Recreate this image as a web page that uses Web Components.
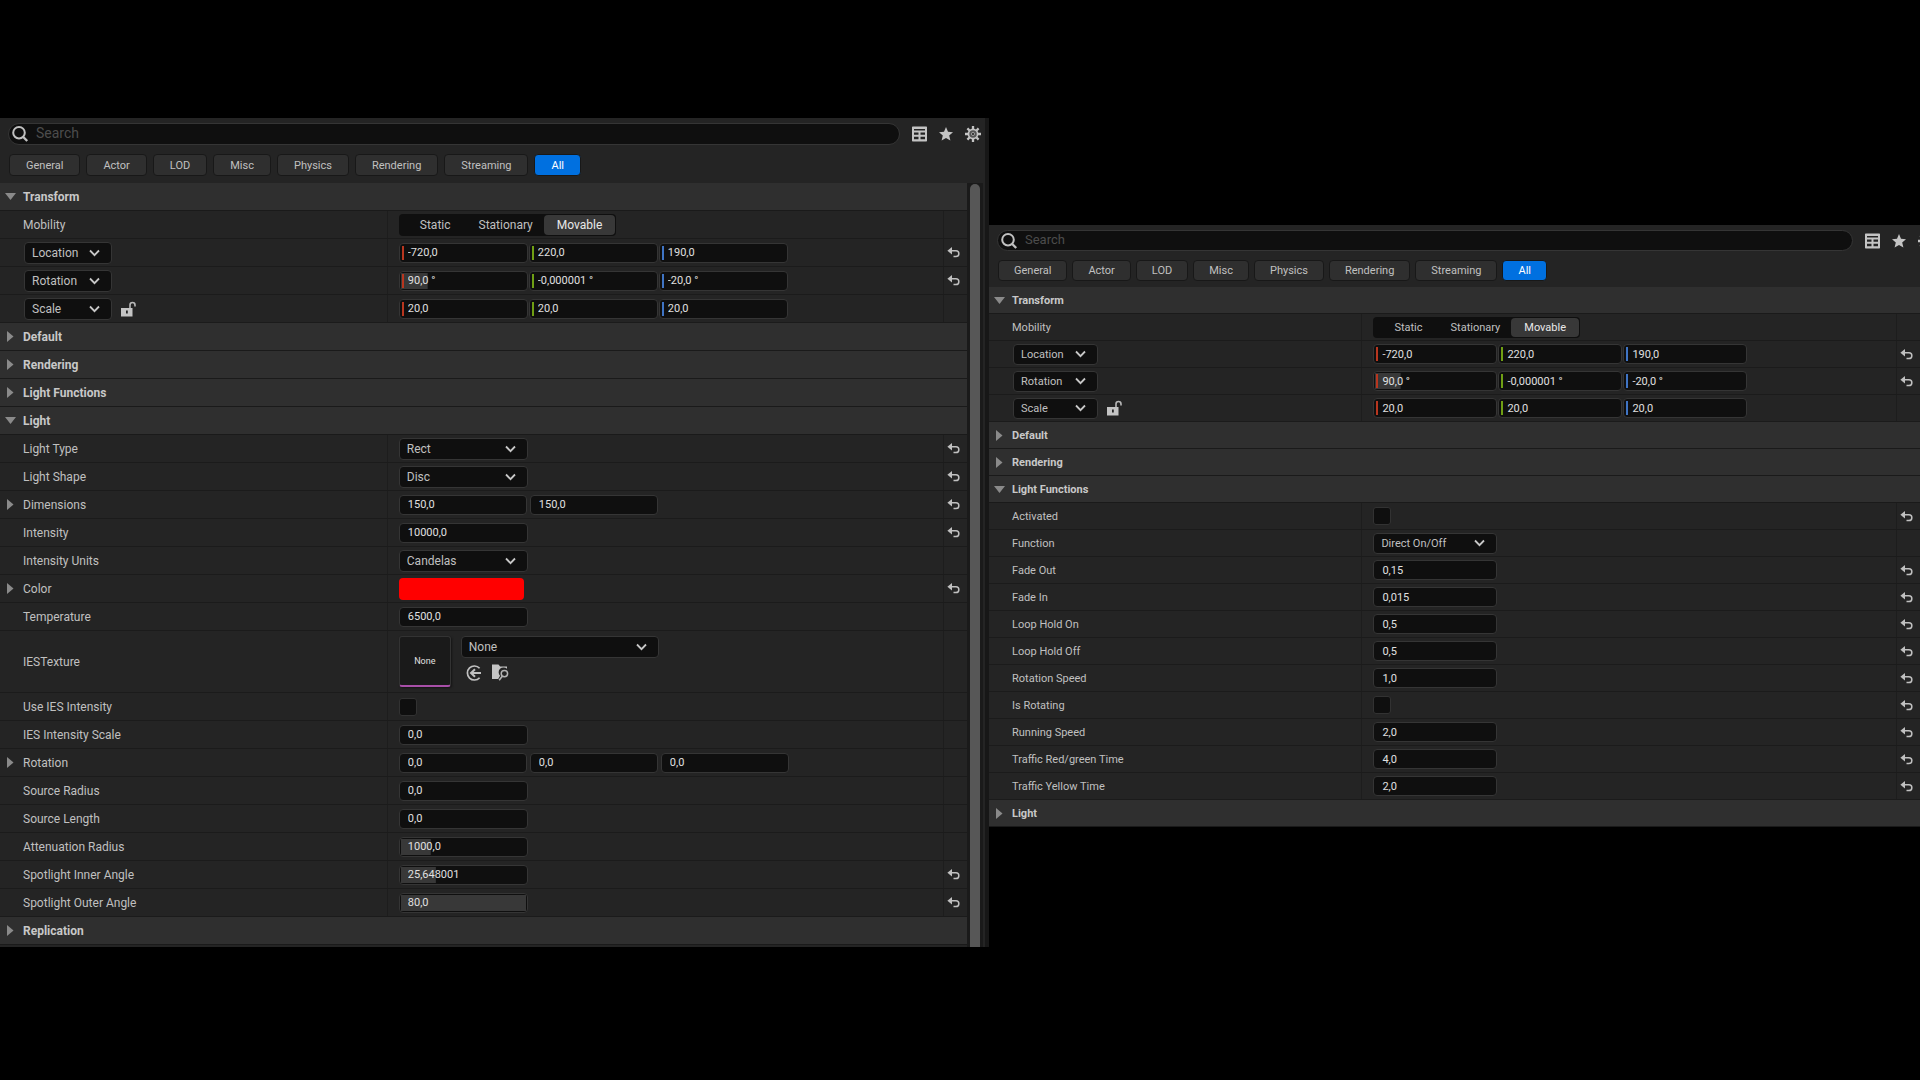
<!DOCTYPE html>
<html lang="en">
<head>
<meta charset="utf-8">
<title>Details</title>
<style>
  html, body { margin: 0; background: #000; }
  body { min-height: 100vh; overflow-x: hidden; font-family: Roboto, "Liberation Sans", sans-serif; color: #c0c0c0; }
  main { display: grid; grid-template-columns: 989fr 931fr; align-items: start; }
  details-panel.first { --row: 28px; --control: 22px; --field: 20px; --size: 12px; --small: 11px; --search: 14px; --unit: 129px; --drop: 88px; --tab-pad: 16px; --tab-gap: 6px; --end: 7px; margin-top: 118px; }
  details-panel.second { --row: 27px; --control: 21px; --field: 20px; --size: 11px; --small: 11px; --search: 13px; --unit: 124px; --drop: 85px; --tab-pad: 15px; --tab-gap: 5px; --end: 6px; margin-top: 225px; }
</style>
</head>
<body>
<main>
  <details-panel class="first" scrollbar>
    <prop-section name="Transform" open>
      <prop-row label="Mobility" kind="segments" values="Static|Stationary|Movable"></prop-row>
      <prop-row label="Location" kind="axes" values="-720,0|220,0|190,0" reset></prop-row>
      <prop-row label="Rotation" kind="axes" values="90,0 °|-0,000001 °|-20,0 °" fill="21" reset></prop-row>
      <prop-row label="Scale" kind="axes" values="20,0|20,0|20,0" lock></prop-row>
    </prop-section>
    <prop-section name="Default"></prop-section>
    <prop-section name="Rendering"></prop-section>
    <prop-section name="Light Functions"></prop-section>
    <prop-section name="Light" open>
      <prop-row label="Light Type" kind="choice" values="Rect" reset></prop-row>
      <prop-row label="Light Shape" kind="choice" values="Disc" reset></prop-row>
      <prop-row label="Dimensions" kind="numbers" values="150,0|150,0" expandable reset></prop-row>
      <prop-row label="Intensity" kind="numbers" values="10000,0" reset></prop-row>
      <prop-row label="Intensity Units" kind="choice" values="Candelas"></prop-row>
      <prop-row label="Color" kind="color" values="#ff0000" expandable reset></prop-row>
      <prop-row label="Temperature" kind="numbers" values="6500,0"></prop-row>
      <prop-row label="IESTexture" kind="asset" values="None"></prop-row>
      <prop-row label="Use IES Intensity" kind="check"></prop-row>
      <prop-row label="IES Intensity Scale" kind="numbers" values="0,0"></prop-row>
      <prop-row label="Rotation" kind="numbers" values="0,0|0,0|0,0" expandable></prop-row>
      <prop-row label="Source Radius" kind="numbers" values="0,0"></prop-row>
      <prop-row label="Source Length" kind="numbers" values="0,0"></prop-row>
      <prop-row label="Attenuation Radius" kind="numbers" values="1000,0" fill="25"></prop-row>
      <prop-row label="Spotlight Inner Angle" kind="numbers" values="25,648001" fill="29" reset></prop-row>
      <prop-row label="Spotlight Outer Angle" kind="numbers" values="80,0" fill="100" reset></prop-row>
    </prop-section>
    <prop-section name="Replication"></prop-section>
  </details-panel>

  <details-panel class="second">
    <prop-section name="Transform" open>
      <prop-row label="Mobility" kind="segments" values="Static|Stationary|Movable"></prop-row>
      <prop-row label="Location" kind="axes" values="-720,0|220,0|190,0" reset></prop-row>
      <prop-row label="Rotation" kind="axes" values="90,0 °|-0,000001 °|-20,0 °" fill="21" reset></prop-row>
      <prop-row label="Scale" kind="axes" values="20,0|20,0|20,0" lock></prop-row>
    </prop-section>
    <prop-section name="Default"></prop-section>
    <prop-section name="Rendering"></prop-section>
    <prop-section name="Light Functions" open>
      <prop-row label="Activated" kind="check" reset></prop-row>
      <prop-row label="Function" kind="choice" values="Direct On/Off"></prop-row>
      <prop-row label="Fade Out" kind="numbers" values="0,15" reset></prop-row>
      <prop-row label="Fade In" kind="numbers" values="0,015" reset></prop-row>
      <prop-row label="Loop Hold On" kind="numbers" values="0,5" reset></prop-row>
      <prop-row label="Loop Hold Off" kind="numbers" values="0,5" reset></prop-row>
      <prop-row label="Rotation Speed" kind="numbers" values="1,0" reset></prop-row>
      <prop-row label="Is Rotating" kind="check" reset></prop-row>
      <prop-row label="Running Speed" kind="numbers" values="2,0" reset></prop-row>
      <prop-row label="Traffic Red/green Time" kind="numbers" values="4,0" reset></prop-row>
      <prop-row label="Traffic Yellow Time" kind="numbers" values="2,0" reset></prop-row>
    </prop-section>
    <prop-section name="Light"></prop-section>
  </details-panel>
</main>

<script>
const BASE = `
  :host, *, *::before { box-sizing: border-box; }
  button, input, select { font: inherit; color: inherit; margin: 0; padding: 0; border: 0; background: none; outline: none; border-radius: 0; appearance: none; }
  button, select { cursor: pointer; }
  svg { display: block; flex: none; }
`;

const ICONS = {
  search: `<svg width="18" height="18" viewBox="0 0 18 18" fill="none" stroke="#c0c0c0" stroke-width="2"><circle cx="8" cy="7.7" r="5.8"/><path d="M12.2 12l4 4" stroke-width="2.4"/></svg>`,
  table: `<svg width="15" height="16" viewBox="0 0 15 16"><path fill="#c4c4c4" fill-rule="evenodd" d="M0 1.2Q0 .5.7.5h13.6q.7 0 .7.7v13.6q0 .7-.7.7H.7q-.7 0-.7-.7zM2 3v1.6h11V3zM2 6.6v2.2h4.5V6.6zm6.5 0v2.2H13V6.6zM2 10.8v2.4h4.5v-2.4zm6.5 0v2.4H13v-2.4z"/></svg>`,
  star: `<svg width="14" height="14" viewBox="0 0 14 14"><path fill="#c4c4c4" d="M7 0l2 4.7 5 .5-3.8 3.3 1.2 5.1L7 10.9l-4.4 2.7 1.2-5.1L0 5.2l5-.5z"/></svg>`,
  gear: `<svg width="16" height="16" viewBox="0 0 16 16" fill="none" stroke="#c4c4c4"><g stroke-width="2.3"><path d="M8 0v3M8 13v3M0 8h3M13 8h3M2.4 2.4l2.1 2.1M11.5 11.5l2.1 2.1M13.6 2.4l-2.1 2.1M4.5 11.5l-2.1 2.1"/></g><circle cx="8" cy="8" r="4.6" stroke-width="1.7" fill="#555"/><circle cx="8" cy="8" r="1.6" fill="#333" stroke="#999" stroke-width="1"/></svg>`,
  chevron: `<svg class="chevron" width="11" height="8" viewBox="0 0 11 8" fill="none" stroke="#c8c8c8" stroke-width="1.8"><path d="M1 1.5l4.5 4.6L10 1.5"/></svg>`,
  reset: `<svg width="13" height="11" viewBox="0 0 13 11"><path fill="#c0c0c0" d="M5 0v7.6L.4 3.8z"/><path d="M3 3.8h6a2.8 2.8 0 0 1 0 5.7H6.5" fill="none" stroke="#c0c0c0" stroke-width="1.5"/></svg>`,
  lock: `<svg width="15" height="16" viewBox="0 0 15 16"><path d="M9 7V4a2.5 2.5 0 0 1 5 0v1.6" fill="none" stroke="#b8b8b8" stroke-width="1.6"/><path fill="#c4c4c4" fill-rule="evenodd" d="M0 7h11.5v8.5H0zM5 9.5v3h1.8v-3z"/></svg>`,
  use: `<svg width="16" height="16" viewBox="0 0 16 16" fill="none" stroke="#c0c0c0"><path d="M13.6 3.3a7 7 0 1 0 0 9.4" stroke-width="1.7"/><path d="M15 8H6" stroke-width="2"/><path d="M9 4.2L5 8l4 3.8" stroke-width="2"/></svg>`,
  browse: `<svg width="17" height="17" viewBox="0 0 17 17"><path fill="#c4c4c4" d="M0 .5h6.5l1.6 2H15v2.3a4.9 4.9 0 0 0-6.9 7L6.2 15H0z"/><circle cx="12.4" cy="9.6" r="3.2" fill="#242424" stroke="#b4b4b4" stroke-width="1.5"/><path d="M10.4 12L7.2 16.2" stroke="#b4b4b4" stroke-width="1.6"/></svg>`,
  down: `<svg width="11" height="7" viewBox="0 0 11 7"><path fill="#8a8a8a" d="M0 0h11L5.5 7z"/></svg>`,
  right: `<svg width="7" height="11" viewBox="0 0 7 11"><path fill="#8a8a8a" d="M0 0v11l6.5-5.5z"/></svg>`
};

/* Search field with the view buttons at its right */
class SearchBar extends HTMLElement {
  connectedCallback() {
    this.attachShadow({ mode: 'open' }).innerHTML = `<style>${BASE}
      :host { display: flex; align-items: center; gap: 12px; }
      label { flex: 1; display: flex; align-items: center; gap: 7px; height: var(--control); padding-left: 2px; border: 1px solid #353535; border-radius: 11px; background: #0f0f0f; }
      input { flex: 1; min-width: 0; height: 16px; font-size: var(--search); padding-bottom: 2px; }
      input::placeholder { color: #4c4c4c; opacity: 1; }
      button { display: grid; place-items: center; }
      </style>
      <label>${ICONS.search}<input type="text" placeholder="Search" aria-label="Search"></label>
      <button aria-label="Property matrix">${ICONS.table}</button>
      <button aria-label="Favorites">${ICONS.star}</button>
      <button aria-label="Settings">${ICONS.gear}</button>`;
  }
}
customElements.define('search-bar', SearchBar);

/* Row of category buttons */
class CategoryTabs extends HTMLElement {
  connectedCallback() {
    const names = ['General', 'Actor', 'LOD', 'Misc', 'Physics', 'Rendering', 'Streaming', 'All'];
    this.attachShadow({ mode: 'open' }).innerHTML = `<style>${BASE}
      :host { display: flex; gap: var(--tab-gap); padding-left: 1px; font-size: var(--small); }
      button { height: var(--control); padding: 0 var(--tab-pad); border: 1px solid #181818; border-radius: 4px; background: #2f2f2f; }
      button[aria-pressed="true"] { background: #0070e0; color: #fff; }
      </style>` + names.map(n => `<button aria-pressed="${n === 'All'}">${n}</button>`).join('');
  }
}
customElements.define('category-tabs', CategoryTabs);

/* The panel: search, categories, and the slotted list of sections */
class DetailsPanel extends HTMLElement {
  connectedCallback() {
    const bar = this.hasAttribute('scrollbar');
    this.attachShadow({ mode: 'open' }).innerHTML = `<style>${BASE}
      :host { display: block; background: #242424; overflow: hidden; min-width: 0; font-size: var(--size); }
      header { display: flex; flex-direction: column; gap: 9px; padding: 5px 4px var(--end) 8px; }
      :host(:not([scrollbar])) header { margin-right: -18px; }
      :host([scrollbar]) { border-right: 4px solid #171717; }
      .body { display: flex; }
      .list { flex: 1; min-width: 0; }
      :host([scrollbar]) .list { padding-bottom: 2px; }
      .track { flex: none; width: 16px; padding: 1px 3px 0; background: #1a1a1a; display: flex; margin-right: 2px; }
      .thumb { flex: 1; border-radius: 5px 5px 0 0; background: #575757; }
      </style>
      <header><search-bar></search-bar><category-tabs></category-tabs></header>
      <div class="body"><div class="list"><slot></slot></div>${bar ? '<div class="track"><div class="thumb"></div></div>' : ''}</div>`;
  }
}
customElements.define('details-panel', DetailsPanel);

/* Collapsible section */
class PropSection extends HTMLElement {
  connectedCallback() {
    const open = this.hasAttribute('open');
    this.attachShadow({ mode: 'open' }).innerHTML = `<style>${BASE}
      :host { display: block; }
      button { display: flex; align-items: center; width: 100%; height: var(--row); background: #2f2f2f; border-bottom: 1px solid #1a1a1a; font-weight: 700; color: #c8c8c8; text-align: left; }
      .arrow { width: 23px; padding-right: 2px; display: grid; place-items: center; }
      </style>
      <button aria-expanded="${open}"><span class="arrow">${open ? ICONS.down : ICONS.right}</span><span>${this.getAttribute('name')}</span></button>
      ${open ? '<slot></slot>' : ''}`;
  }
}
customElements.define('prop-section', PropSection);

/* One property: name, editor and reset button */
class PropRow extends HTMLElement {
  connectedCallback() {
    const label = this.getAttribute('label');
    const kind = this.getAttribute('kind');
    const values = (this.getAttribute('values') || '').split('|');
    const fill = this.getAttribute('fill');
    const parts = values.length === 3 ? ['X', 'Y', 'Z'] : ['Width', 'Height'];
    const field = (v, i) => `<input type="text" class="num${i === 0 && fill ? ' filled' : ''}" ${i === 0 ? `id="value" style="--fill:${fill || 0}%"` : ''} value="${v}" ${values.length > 1 ? `aria-label="${label} ${parts[i]}"` : ''}>`;
    const select = (v, id, cls) => `<span class="pick ${cls}"><select id="${id}" ${id === 'value' ? '' : `aria-label="${label} mode"`}><option>${v}</option></select>${ICONS.chevron}</span>`;
    const editors = {
      segments: () => `<div class="segments" role="group" aria-label="${label}">${values.map(v => `<button aria-pressed="${v === 'Movable'}">${v}</button>`).join('')}</div>`,
      axes: () => `<div class="fields axes">${values.map(field).join('')}</div>`,
      numbers: () => `<div class="fields">${values.map(field).join('')}</div>`,
      choice: () => select(values[0], 'value', 'unit'),
      color: () => `<input type="color" id="value" value="${values[0]}">`,
      check: () => `<input type="checkbox" id="value">`,
      asset: () => `<div class="asset"><div class="thumb">None</div><div class="stack">${select(values[0], 'value', 'wide')}<div class="tools"><button aria-label="Use selected asset">${ICONS.use}</button><button aria-label="Browse to asset">${ICONS.browse}</button></div></div></div>`
    };
    const name = kind === 'axes' ? select(label, 'mode', 'mode') + (this.hasAttribute('lock') ? `<button class="lock" aria-label="Lock scale">${ICONS.lock}</button>` : '')
      : kind === 'segments' ? `<span>${label}</span>` : `<label for="value">${label}</label>`;
    this.attachShadow({ mode: 'open' }).innerHTML = `<style>${BASE}
      :host { display: grid; grid-template-columns: 40% 1fr 24px; min-height: var(--row); border-bottom: 1px solid #1b1b1b; }
      :host([kind="asset"]) { min-height: 62px; }
      .name, .value { display: flex; align-items: center; }
      .value { border-left: 1px solid #1d1d1d; padding-left: 11px; color: #e0e0e0; }
      .arrow { width: 23px; padding-right: 2px; display: grid; place-items: center; }
      .reset { border-left: 1px solid #1d1d1d; padding-right: 4px; display: grid; place-items: center; }
      .reset button { display: block; }
      .fields { display: flex; gap: 3px; }
      .axes { gap: 1px; }
      .num { width: var(--unit); height: var(--field); padding: 0 0 0 8px; border: 1px solid #353535; border-radius: 4px; background: #0f0f0f; font-size: var(--small); }
      .fields:not(.axes) .num:not(:only-child) { width: calc(var(--unit) - 1px); }
      .filled { background: linear-gradient(#383838, #383838) 1px 1px / calc(var(--fill) - 2px) calc(100% - 2px) no-repeat #0f0f0f; }
      .axes .num { --bar: linear-gradient(var(--axis), var(--axis)) 2px 2px / 2px calc(100% - 4px) no-repeat; background: var(--bar), #0f0f0f; }
      .axes .filled { background: var(--bar), linear-gradient(#383838, #383838) 1px 1px / var(--fill) calc(100% - 2px) no-repeat #0f0f0f; }
      .axes .num:nth-child(1) { --axis: #b8361f; }
      .axes .num:nth-child(2) { --axis: #6f9f14; }
      .axes .num:nth-child(3) { --axis: #3f74c4; }
      .pick { display: inline-grid; align-items: center; height: var(--control); color: #c0c0c0; }
      .pick > * { grid-area: 1 / 1; }
      .pick select { width: 100%; height: 100%; padding: 0 0 0 7px; border: 1px solid #353535; border-radius: 4px; background: #0f0f0f; }
      .chevron { justify-self: end; margin-right: 12px; pointer-events: none; }
      .unit { width: var(--unit); }
      .mode { width: var(--drop); margin-left: 1px; }
      .wide { width: 198px; }
      .segments { display: flex; height: var(--control); padding: 1px; border-radius: 4px; background: #0f0f0f; color: #c0c0c0; }
      .segments button { padding: 0 11px; border-radius: 4px; }
      .segments button:first-child { padding-left: 20px; padding-right: 17px; }
      .segments button[aria-pressed="true"] { background: #383838; color: #e8e8e8; padding: 0 13px; }
      input[type="checkbox"] { width: 18px; height: 18px; border: 1px solid #323232; border-radius: 3px; background: #0f0f0f; }
      input[type="color"] { width: 125px; height: 22px; border-radius: 4px; overflow: hidden; cursor: pointer; }
      input[type="color"]::-webkit-color-swatch-wrapper { padding: 0; }
      input[type="color"]::-webkit-color-swatch { border: 0; }
      .lock { margin-left: 9px; }
      .asset { display: flex; gap: 10px; }
      .thumb { width: 52px; height: 51px; display: grid; place-items: center; font-size: 9px; background: #1a1a1a; border: 1px solid #333; border-bottom: 2px solid #a84fa8; border-radius: 3px; box-shadow: 1px 1px 2px #151515; }
      .stack { display: flex; flex-direction: column; gap: 6px; }
      .tools { display: flex; gap: 10px; padding-left: 5px; }
      </style>
      <div class="name"><span class="arrow">${this.hasAttribute('expandable') ? ICONS.right : ''}</span>${name}</div>
      <div class="value">${editors[kind]()}</div>
      <div class="reset">${this.hasAttribute('reset') ? `<button aria-label="Reset ${label}">${ICONS.reset}</button>` : ''}</div>`;
  }
}
customElements.define('prop-row', PropRow);
</script>
</body>
</html>
